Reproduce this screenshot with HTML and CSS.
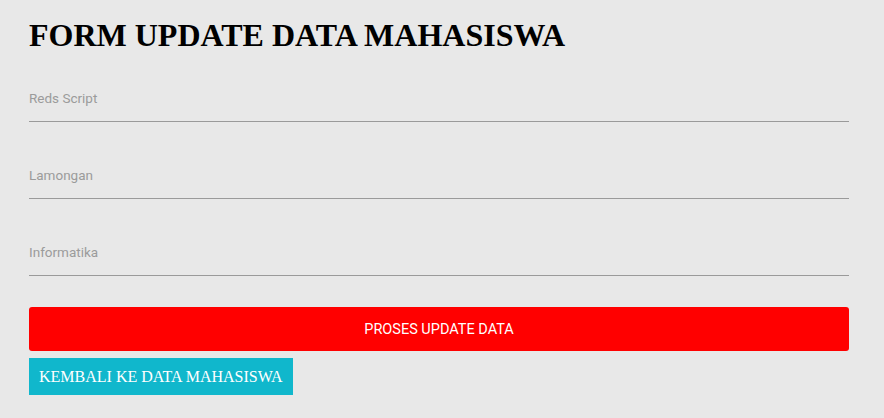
FILE: index.html
```html
<!DOCTYPE html>
<html>
<head>
<meta charset="utf-8">
<link rel="stylesheet" href="styles.css">
</head>
<body>
<div class="wrap">
  <h1 class="title">FORM UPDATE DATA MAHASISWA</h1>
  <form class="form">
    <input class="field" type="text" placeholder="Reds Script">
    <input class="field" type="text" placeholder="Lamongan">
    <input class="field last" type="text" placeholder="Informatika">
    <button class="submit" type="button">PROSES UPDATE DATA</button>
  </form>
  <a class="back" href="#">KEMBALI KE DATA MAHASISWA</a>
</div>
</body>
</html>
```
FILE: styles.css
```css
html, body {
  margin: 0;
  padding: 0;
  background: #e8e8e8;
}
.wrap {
  padding: 17px 35px 0 29px;
  font-family: "Liberation Serif", "Times New Roman", serif;
}
.title {
  margin: 0;
  font-size: 32px;
  line-height: 36px;
  font-weight: bold;
  color: #000;
}
.form {
  display: flex;
  flex-direction: column;
  margin-top: 24px;
}
.field {
  display: block;
  box-sizing: border-box;
  width: 100%;
  height: 45px;
  margin: 0 0 32px 0;
  padding: 0 0 3px 0;
  border: none;
  border-bottom: 1px solid #9a9a9a;
  background: transparent;
  font-family: Roboto, "Liberation Sans", sans-serif;
  font-size: 13.5px;
  color: #333;
  outline: none;
}
.field.last {
  margin-bottom: 31px;
}
.field::placeholder {
  color: #9b9b9b;
}
.submit {
  display: block;
  width: 100%;
  height: 44px;
  border: none;
  border-radius: 3px;
  background: #ff0000;
  color: #fff;
  font-family: Roboto, "Liberation Sans", sans-serif;
  font-size: 14.5px;
  margin: 0 0 7px 0;
  padding: 0;
  cursor: pointer;
}
.back {
  display: inline-block;
  padding: 9px 10px;
  line-height: 19px;
  font-size: 16px;
  background: #10b7cc;
  color: #fff;
  text-decoration: none;
}
```
